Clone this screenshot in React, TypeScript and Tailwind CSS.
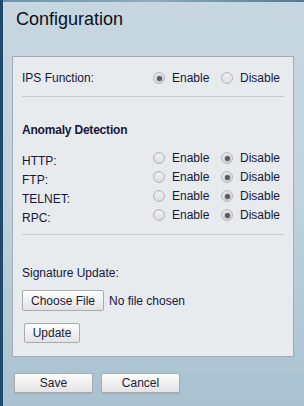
import React from "react";

const font = { fontFamily: '"Liberation Sans", Arial, sans-serif' };

function Radio({ checked }: { checked: boolean }) {
  return (
    <span className="flex h-[12px] w-[12px] shrink-0 items-center justify-center rounded-full border border-[#b4b8bb] bg-gradient-to-b from-[#f4f4f4] to-[#d9dcde] shadow-[inset_0_1px_1px_rgba(0,0,0,0.08)]">
      {checked && <span className="h-[5px] w-[5px] rounded-full bg-[#555a5e] shadow-[0_0_1px_1px_rgba(120,120,120,0.35)]" />}
    </span>
  );
}

function Options({ enabled }: { enabled: boolean }) {
  return (
    <div className="flex items-center leading-[16px]">
      <div className="flex w-[68px] items-center gap-[7px]">
        <Radio checked={enabled} />
        <span>Enable</span>
      </div>
      <div className="flex items-center gap-[7px]">
        <Radio checked={!enabled} />
        <span>Disable</span>
      </div>
    </div>
  );
}

function Btn({ children, className }: { children: React.ReactNode; className: string }) {
  return (
    <button
      type="button"
      className={
        "flex items-center justify-center rounded-[2px] border border-[#a9abad] bg-gradient-to-b from-[#fdfdfd] to-[#e2e3e4] text-[12px] leading-[14px] text-[#1a1a33] " +
        className
      }
      style={font}
    >
      {children}
    </button>
  );
}

export default function App() {
  const rows = ["HTTP:", "FTP:", "TELNET:", "RPC:"];
  return (
    <div
      className="flex h-[406px] w-[304px] flex-col overflow-hidden border-l-[3px] border-[#1d4a6e] bg-gradient-to-b from-[#c7d7e0] via-[#bfd2dd] to-[#a9c1d0] text-[#16163a]"
      style={font}
    >
      <div className="h-[2px] bg-gradient-to-r from-[#6f93ab] via-[#8fabbd] to-[#4f7893]" />
      <div className="pl-[13px] pt-[6px] text-[18px] leading-[22px] text-[#0e0e1c]">Configuration</div>

      <div className="ml-[9px] mt-[26px] flex h-[301px] w-[282px] flex-col border border-[#a3acb2] bg-[#e7ebee] px-[9px] pt-[13px] text-[12px]">
        <div className="flex items-center leading-[16px]">
          <div className="w-[131px]">IPS Function:</div>
          <Options enabled={true} />
        </div>
        <div className="mt-[10px] h-px bg-[#c6cbce]" />

        <div className="mt-[25px] text-[12px] font-bold leading-[16px] tracking-[-0.2px]">Anomaly Detection</div>

        <div className="mt-[12px] flex flex-col">
          {rows.map((r) => (
            <div key={r} className="flex h-[19px] items-start">
              <div className="w-[131px] pt-[3px] leading-[16px]">{r}</div>
              <Options enabled={false} />
            </div>
          ))}
        </div>
        <div className="mt-[8px] h-px bg-[#c6cbce]" />

        <div className="mt-[30px] leading-[16px]">Signature Update:</div>
        <div className="mt-[9px] flex items-center">
          <Btn className="h-[21px] w-[82px]">Choose File</Btn>
          <span className="ml-[5px] leading-[16px]">No file chosen</span>
        </div>
        <div className="mt-[12px] flex">
          <Btn className="ml-[2px] h-[20px] w-[56px]">Update</Btn>
        </div>
      </div>

      <div className="ml-[11px] mt-[16px] flex gap-[8px]">
        <Btn className="h-[20px] w-[79px] shadow-[0_1px_1px_rgba(0,0,0,0.1)]">Save</Btn>
        <Btn className="h-[20px] w-[79px] shadow-[0_1px_1px_rgba(0,0,0,0.1)]">Cancel</Btn>
      </div>
    </div>
  );
}
